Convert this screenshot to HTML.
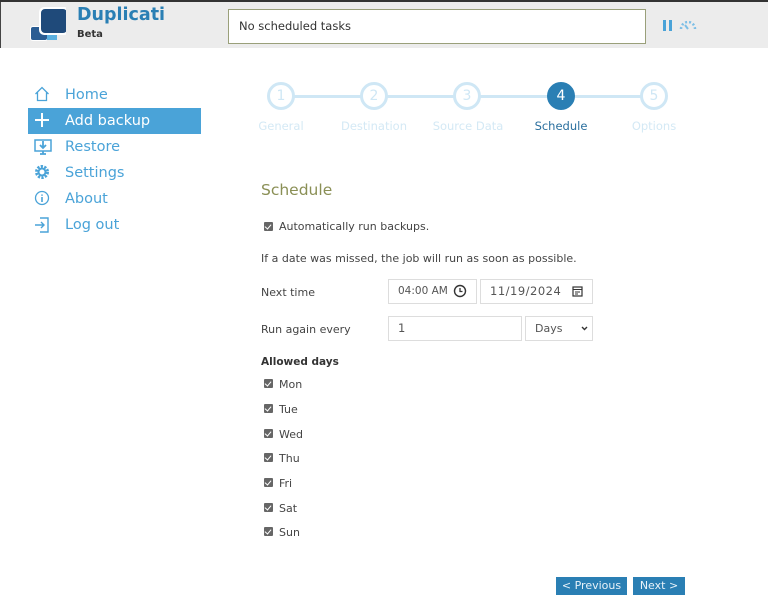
<!DOCTYPE html>
<html><head><style>
*{box-sizing:border-box;margin:0;padding:0}
body{width:768px;height:605px;overflow:hidden;background:#fff;font-family:"DejaVu Sans","Liberation Sans",sans-serif;position:relative;color:#333}
.top{position:absolute;left:0;top:0;width:768px;height:2px;background:#333}
.hdr{position:absolute;left:0;top:2px;width:768px;height:46px;background:#ececec;border-left:1px solid #444}
.a{position:absolute;white-space:nowrap}
.nav{position:absolute;left:28px;width:173px;height:26px;font-size:14.5px;color:#4aa3d8;line-height:27px;padding-left:37px}
.nav svg{position:absolute;left:6px;top:4px}
.circ{position:absolute;top:82px;width:28px;height:28px;border-radius:50%;border:3px solid #cfe7f5;color:#cfe7f5;font-size:14px;text-align:center;line-height:22px;background:#fff}
.lbl{position:absolute;top:119px;font-size:11.5px;color:#d4e9f5;text-align:center;width:100px}
.f{font-size:11px;color:#444}
.inp{position:absolute;border:1px solid #ddd;height:25px;font-size:11.5px;line-height:23px;padding-left:9px;color:#555}
.cb{position:absolute;left:264px;width:9px;height:9px;background:#666;border-radius:1px}
.cb:after{content:"";position:absolute;left:2px;top:1px;width:3px;height:5px;border:solid #fff;border-width:0 1.3px 1.3px 0;transform:rotate(40deg)}
.day{position:absolute;left:279px;font-size:11px;color:#444}
.btn{position:absolute;top:577px;height:18px;background:#2a7fb4;color:#e8f2f9;font-size:11px;line-height:18px;text-align:center}
</style></head><body>
<div class="top"></div>
<div class="hdr"></div>
<svg class="a" style="left:28px;top:6px" width="38" height="38"><rect x="2" y="20" width="18" height="15" rx="3" fill="#fff"/><rect x="3" y="21" width="16" height="13" rx="2" fill="#2b5d93"/><rect x="19" y="27" width="10" height="7" fill="#5bb0e0"/><rect x="11" y="1" width="30" height="28" rx="5" fill="#fff"/><rect x="13" y="3" width="26" height="24" rx="4" fill="#1f4a7a"/></svg>
<div class="a" style="left:77px;top:5px;font-size:17.5px;font-weight:bold;color:#2a7fb4">Duplicati</div>
<div class="a" style="left:77px;top:29px;font-size:10px;font-weight:bold;color:#333">Beta</div>
<div class="a" style="left:228px;top:9px;width:418px;height:35px;background:#fff;border:1px solid #9aa07a;font-size:11.5px;line-height:33px;padding-left:10px;color:#333">No scheduled tasks</div>
<div class="a" style="left:663px;top:20px;width:3px;height:11px;background:#4aa3d8"></div>
<div class="a" style="left:669px;top:20px;width:3px;height:11px;background:#4aa3d8"></div>
<svg class="a" style="left:679px;top:19px" width="18" height="12"><path d="M2 10 A7 7 0 0 1 16 10" fill="none" stroke="#7dbfe6" stroke-width="2.5" stroke-dasharray="2 2"/><path d="M9 10 L6 6" stroke="#7dbfe6" stroke-width="2"/></svg>

<div class="nav" style="top:82px"><svg width="16" height="16" viewBox="0 0 16 16"><path d="M1.5 8 L8 1.5 L14.5 8 M3.5 6.5 V14.5 H12.5 V6.5" fill="none" stroke="#4aa3d8" stroke-width="1.3"/></svg>Home</div>
<div class="nav" style="top:108px;background:#4aa3d8;color:#fff"><svg width="16" height="16"><path d="M8 1V15M1 8H15" stroke="#fff" stroke-width="2"/></svg>Add backup</div>
<div class="nav" style="top:134px"><svg width="18" height="18"><rect x="1" y="2" width="16" height="11" fill="none" stroke="#4aa3d8" stroke-width="1.5"/><path d="M9 3V10M6 7L9 10 12 7M6 16H12M9 13V16" stroke="#4aa3d8" stroke-width="1.8" fill="none"/></svg>Restore</div>
<div class="nav" style="top:160px"><svg width="16" height="16"><circle cx="8" cy="8" r="5.5" fill="none" stroke="#4aa3d8" stroke-width="3" stroke-dasharray="2.2 1.3"/><circle cx="8" cy="8" r="3.5" fill="none" stroke="#4aa3d8" stroke-width="2"/></svg>Settings</div>
<div class="nav" style="top:186px"><svg width="16" height="16"><circle cx="8" cy="8" r="6.5" fill="none" stroke="#4aa3d8" stroke-width="1.3"/><path d="M8 7V12M8 4.5V5.8" stroke="#4aa3d8" stroke-width="1.6"/></svg>About</div>
<div class="nav" style="top:212px"><svg width="16" height="18"><path d="M6 2H14V16H6M1 9H10M7 6L10 9 7 12" fill="none" stroke="#4aa3d8" stroke-width="1.4"/></svg>Log out</div>

<div class="a" style="left:290px;top:95px;width:365px;height:3px;background:#cfe7f5"></div>
<div class="circ" style="left:267px">1</div>
<div class="circ" style="left:360px">2</div>
<div class="circ" style="left:453px">3</div>
<div class="circ" style="left:547px;background:#2a7fb4;border-color:#2a7fb4;color:#fff">4</div>
<div class="circ" style="left:640px">5</div>
<div class="lbl" style="left:231px">General</div>
<div class="lbl" style="left:324px">Destination</div>
<div class="lbl" style="left:418px">Source Data</div>
<div class="lbl" style="left:511px;color:#2a6f9e">Schedule</div>
<div class="lbl" style="left:604px">Options</div>

<div class="a" style="left:261px;top:181px;font-size:15.5px;color:#8a8f55">Schedule</div>
<div class="cb" style="top:222px"></div>
<div class="a f" style="left:279px;top:220px">Automatically run backups.</div>
<div class="a f" style="left:261px;top:252px">If a date was missed, the job will run as soon as possible.</div>
<div class="a f" style="left:261px;top:286px">Next time</div>
<div class="inp" style="left:388px;top:279px;width:89px;font-size:10.5px">04:00 AM</div>
<svg class="a" style="left:453px;top:284px" width="14" height="14"><circle cx="7" cy="7" r="5.5" fill="none" stroke="#333" stroke-width="1.4"/><path d="M7 4V7.5H9.5" fill="none" stroke="#333" stroke-width="1.3"/></svg>
<div class="inp" style="left:480px;top:279px;width:113px;letter-spacing:0.5px">11/19/2024</div>
<svg class="a" style="left:572px;top:286px" width="11" height="11"><rect x="1" y="1" width="9" height="9" fill="none" stroke="#333" stroke-width="1.2"/><path d="M1 3.5H10M3 6H8M3 8H6" stroke="#333" stroke-width="1"/></svg>
<div class="a f" style="left:261px;top:323px">Run again every</div>
<div class="inp" style="left:388px;top:316px;width:134px">1</div>
<div class="inp" style="left:525px;top:316px;width:68px;font-size:11px">Days</div>
<svg class="a" style="left:581px;top:326px" width="7" height="5"><path d="M1 1L3.5 3.5 6 1" fill="none" stroke="#333" stroke-width="1.4"/></svg>
<div class="a" style="left:261px;top:356px;font-size:10.5px;font-weight:bold;color:#333">Allowed days</div>

<div class="cb" style="top:379px"></div><div class="day" style="top:378px">Mon</div>
<div class="cb" style="top:404px"></div><div class="day" style="top:403px">Tue</div>
<div class="cb" style="top:429px"></div><div class="day" style="top:428px">Wed</div>
<div class="cb" style="top:453px"></div><div class="day" style="top:452px">Thu</div>
<div class="cb" style="top:478px"></div><div class="day" style="top:477px">Fri</div>
<div class="cb" style="top:503px"></div><div class="day" style="top:502px">Sat</div>
<div class="cb" style="top:527px"></div><div class="day" style="top:526px">Sun</div>

<div class="btn" style="left:556px;width:71px">&lt; Previous</div>
<div class="btn" style="left:633px;width:52px">Next &gt;</div>
</body></html>
